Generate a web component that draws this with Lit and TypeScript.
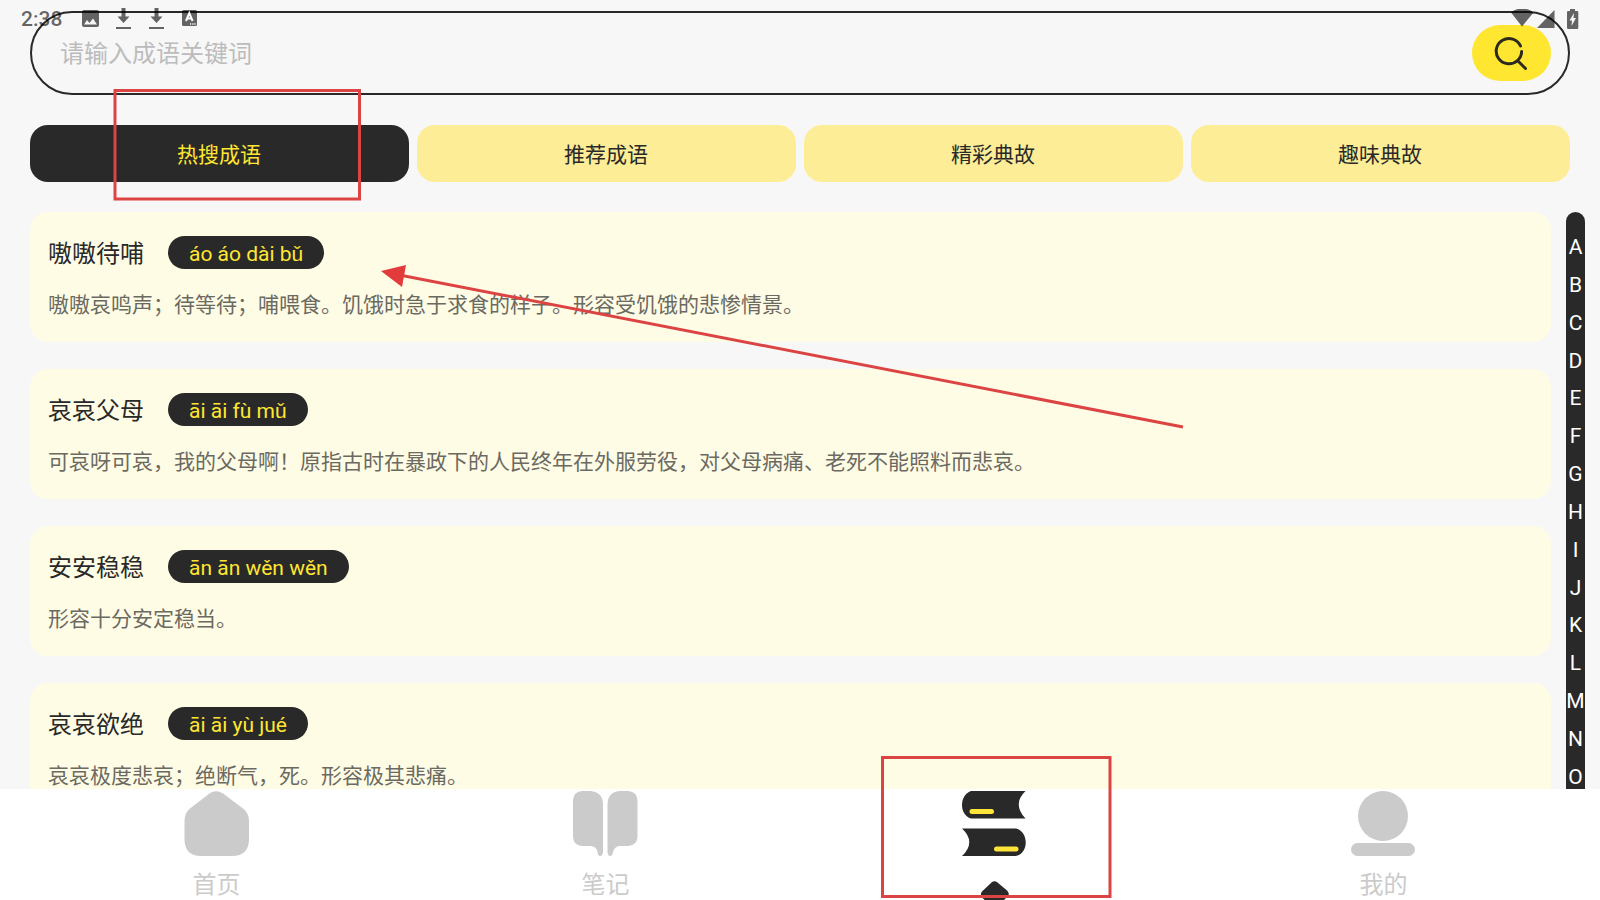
import { LitElement, html, css, svg } from "lit";
import { customElement, state } from "lit/decorators.js";
import { classMap } from "lit/directives/class-map.js";

interface Idiom {
  word: string;
  pinyin: string;
  meaning: string;
}

const TABS = ["热搜成语", "推荐成语", "精彩典故", "趣味典故"];

const IDIOMS: Idiom[] = [
  { word: "嗷嗷待哺", pinyin: "áo áo dài bǔ", meaning: "嗷嗷哀鸣声；待等待；哺喂食。饥饿时急于求食的样子。形容受饥饿的悲惨情景。" },
  { word: "哀哀父母", pinyin: "āi āi fù mǔ", meaning: "可哀呀可哀，我的父母啊！原指古时在暴政下的人民终年在外服劳役，对父母病痛、老死不能照料而悲哀。" },
  { word: "安安稳稳", pinyin: "ān ān wěn wěn", meaning: "形容十分安定稳当。" },
  { word: "哀哀欲绝", pinyin: "āi āi yù jué", meaning: "哀哀极度悲哀；绝断气，死。形容极其悲痛。" },
];

const LETTERS = "ABCDEFGHIJKLMNO".split("");

const downloadIcon = html`<svg width="17" height="22" viewBox="0 0 17 22" aria-hidden="true">
  <path fill="currentColor" d="M5.500 0h4v8.500h4L7.500 15l-6-6.500h4zM0 19h15v2H0z" />
</svg>`;

@customElement("status-bar")
export class StatusBar extends LitElement {
  static styles = css`
    :host {
      display: flex;
      justify-content: space-between;
      align-items: center;
      height: 37px;
      padding: 0 21px;
      color: rgba(0, 0, 0, 0.6);
      font: 500 21px/24px Roboto, sans-serif;
      pointer-events: none;
    }
    .group {
      display: flex;
      align-items: center;
    }
    .notices {
      gap: 16px;
    }
    .time {
      margin-right: 4px;
    }
    .signals {
      gap: 3px;
    }
    .battery {
      margin-left: 9px;
    }
    svg {
      display: block;
    }
  `;

  render() {
    return html`
      <div class="group notices">
        <span class="time">2:38</span>
        <svg width="18" height="18" viewBox="0 0 18 18" aria-hidden="true">
          <path fill="currentColor" fill-rule="evenodd" d="M2 0h13a2 2 0 0 1 2 2v13a2 2 0 0 1-2 2H2a2 2 0 0 1-2-2V2a2 2 0 0 1 2-2zM2 14.500h13l-4-6-3.500 4.500-2.500-3z" />
        </svg>
        ${downloadIcon} ${downloadIcon}
        <svg width="16" height="18" viewBox="0 0 16 18" aria-hidden="true">
          <rect width="15" height="16" rx="1.500" fill="currentColor" />
          <path d="M4 11 7.300 3 10.600 11M5.300 8.500h4" fill="none" stroke="#fff" stroke-width="2" />
          <path d="M8 14h1.200M10.300 14h1.200M12.400 14h1.200" stroke="#fff" stroke-width="1.300" />
        </svg>
      </div>
      <div class="group signals">
        <svg width="23" height="19" viewBox="0 0 23 19" aria-hidden="true">
          <path fill="currentColor" d="M0 3.500C6.500-1.800 16-1.800 22.500 3.500L11 17.500z" />
        </svg>
        <svg width="18" height="18" viewBox="0 0 18 18" aria-hidden="true">
          <path fill="currentColor" d="M17.500 0v18H0z" />
        </svg>
        <svg class="battery" width="12" height="20" viewBox="0 0 12 20" aria-hidden="true">
          <path fill="currentColor" fill-rule="evenodd" d="M3 0h5v2h2a1.300 1.300 0 0 1 1.300 1.300v15.400a1.300 1.300 0 0 1-1.300 1.300H1.300A1.300 1.300 0 0 1 0 18.700V3.300A1.300 1.300 0 0 1 1.300 2H3zM7 4 2.500 11.500h2.500L4.500 17 9 9H6.500z" />
        </svg>
      </div>
    `;
  }
}

@customElement("app-root")
export class AppRoot extends LitElement {
  static styles = css`
    :host {
      --ink: #292929;
      --yellow: #ffe631;
      position: relative;
      display: flex;
      flex-direction: column;
      height: 100vh;
      overflow: hidden;
      background: #f7f7f7;
      color: var(--ink);
      font-family: Roboto, "Liberation Sans", "Noto Sans CJK SC", sans-serif;
      font-weight: 400;
    }
    *,
    *::before {
      box-sizing: border-box;
    }
    button,
    input {
      font: inherit;
      color: inherit;
      border: 0;
      background: none;
      padding: 0;
      margin: 0;
    }
    a {
      color: inherit;
      text-decoration: none;
    }
    svg {
      display: block;
    }
    .status {
      position: absolute;
      inset: 0 0 auto 0;
      z-index: 2;
    }
    .page {
      flex: 1;
      min-height: 0;
      display: flex;
      flex-direction: column;
      gap: 30px;
      padding: 11px 15px 0 30px;
    }
    .search {
      display: flex;
      align-items: center;
      margin-right: 15px;
      height: 84px;
      padding: 0 17px 0 28px;
      border: 2px solid var(--ink);
      border-radius: 42px;
    }
    .field {
      flex: 1;
      min-width: 0;
      height: 56px;
      padding-top: 2px;
      font-size: 24px;
      outline: none;
    }
    .field::placeholder {
      color: #bcbcbc;
      opacity: 1;
    }
    .go {
      display: grid;
      place-items: center;
      width: 79px;
      height: 56px;
      padding: 0 1px 2px 0;
      border-radius: 28px;
      background: var(--yellow);
    }
    .tabs {
      display: grid;
      grid-template-columns: repeat(4, 1fr);
      gap: 8px;
      margin-right: 15px;
    }
    .tab {
      height: 57px;
      padding: 0 1px 2px 0;
      border-radius: 18px;
      background: #fced96;
      font-size: 21px;
    }
    .tab.on {
      background: var(--ink);
      color: var(--yellow);
    }
    .body {
      flex: 1;
      min-height: 0;
      display: flex;
      gap: 15px;
      overflow: hidden;
    }
    .list {
      flex: 1;
      min-width: 0;
      display: flex;
      flex-direction: column;
      gap: 27px;
      margin: 0;
      padding: 0;
      list-style: none;
    }
    .card {
      flex: none;
      display: flex;
      flex-direction: column;
      gap: 20px;
      padding: 24px 18px 21px;
      border-radius: 18px;
      background: #fffce5;
    }
    .head {
      display: flex;
      align-items: flex-start;
      gap: 24px;
    }
    .word {
      margin: 0;
      padding-top: 2px;
      font-size: 24px;
      line-height: 32px;
      font-weight: inherit;
    }
    .pinyin {
      padding: 3px 21px 0;
      border-radius: 17px;
      background: var(--ink);
      color: var(--yellow);
      font-size: 21px;
      line-height: 30px;
    }
    .meaning {
      margin: 0;
      color: #6b6a62;
      font-size: 21px;
      line-height: 31px;
    }
    .index {
      display: flex;
      flex-direction: column;
      align-items: center;
      justify-content: space-between;
      width: 19px;
      padding-top: 23px;
      border-radius: 10px 10px 0 0;
      background: var(--ink);
    }
    .letter {
      color: #fff;
      font-size: 21px;
      line-height: 24px;
    }
    .nav {
      display: grid;
      grid-template-columns: repeat(4, 1fr);
      height: 111px;
      padding: 2px 22px 0;
      background: #fff;
      overflow: hidden;
    }
    .item {
      display: flex;
      flex-direction: column;
      align-items: center;
      gap: 12px;
      color: #cbcbcb;
      font-size: 24px;
      line-height: 34px;
    }
    .current {
      gap: 25px;
      color: var(--ink);
    }
    .marks {
      position: absolute;
      inset: 0;
      width: 100%;
      height: 100%;
      z-index: 3;
      pointer-events: none;
    }
  `;

  @state() private active = 0;

  private navItems = [
    {
      label: "首页",
      art: svg`<path fill="currentColor" d="M25.500 2.500Q32-2 39 2.500L59 17.500Q65 22 65 30V48Q65 65 48 65H17Q0.500 65 0.500 48V30Q0.500 22 6 17.500z" />`,
    },
    {
      label: "笔记",
      art: svg`<path fill="currentColor" d="M8.500 0H17.500Q29.500 1 30 13V61Q29.500 65 27 65Q25 65 24.500 61Q23.500 55.500 17.500 55H8.500Q0.500 54 0 46V9Q0.500 1 8.500 0zM55.500 0H46.500Q35 1 34.500 13V61Q35 65 37 65Q39.500 65 40 61Q41.500 55.500 46.500 55H55.500Q64 54 64.500 46V9Q64 1 55.500 0z" />`,
    },
    {
      label: "",
      art: svg`<path fill="currentColor" d="M9 0H63.500Q50 13 63.500 27.500H9C-3 24-3 4 9 0zM54 37.500H0Q14.500 51 0 65H54C67 62 67 41 54 37.500z" />
        <path stroke="#ffe43a" stroke-width="5" stroke-linecap="round" d="M10 20.500H29.500M34.500 58H54" />`,
    },
    {
      label: "我的",
      art: svg`<circle cx="32" cy="25" r="25" fill="currentColor" /><rect y="52" width="64" height="13" rx="6.500" fill="currentColor" />`,
    },
  ];

  render() {
    return html`
      <status-bar class="status"></status-bar>
      <main class="page">
        <form class="search" role="search" @submit=${(e: Event) => e.preventDefault()}>
          <input class="field" type="text" aria-label="成语关键词" placeholder="请输入成语关键词" />
          <button class="go" type="submit" aria-label="搜索">
            <svg width="40" height="40" viewBox="0 0 40 40" fill="none" stroke="#2b2a1c" stroke-width="3" stroke-linecap="round">
              <path d="M29.500 14A12.700 12.700 0 1 0 26.500 28.500L34.500 36.500M26.500 28.500Q30.700 24.500 30.600 19.500" />
            </svg>
          </button>
        </form>
        <div class="tabs" role="tablist">
          ${TABS.map(
            (name, i) => html`<button
              class=${classMap({ tab: true, on: i === this.active })}
              type="button"
              role="tab"
              aria-selected=${i === this.active}
              @click=${() => (this.active = i)}
            >${name}</button>`
          )}
        </div>
        <div class="body">
          <ul class="list">
            ${IDIOMS.map(
              (it) => html`<li class="card">
                <div class="head">
                  <h2 class="word">${it.word}</h2>
                  <span class="pinyin">${it.pinyin}</span>
                </div>
                <p class="meaning">${it.meaning}</p>
              </li>`
            )}
          </ul>
          <nav class="index" aria-label="字母索引">
            ${LETTERS.map((l) => html`<a class="letter" href="#${l}">${l}</a>`)}
          </nav>
        </div>
      </main>
      <nav class="nav">
        ${this.navItems.map(
          (n) => html`<a class=${classMap({ item: true, current: !n.label })} href="#" aria-label=${n.label || "典籍"}>
            <svg width="65" height="65" viewBox="0 0 65 65" fill="none">${n.art}</svg>
            ${n.label
              ? html`<span>${n.label}</span>`
              : html`<svg width="28" height="28" viewBox="0 0 28 28"><path fill="currentColor" d="M10.500 1.500Q13.500-1 16.500 1.500L26 9.500Q28.500 12 27.500 14.500L16.500 25.500Q13.500 28 10.500 25.500L0.500 16Q-1 13 1 10.500z" /></svg>`}
          </a>`
        )}
      </nav>
      <svg class="marks" viewBox="0 0 1600 900" preserveAspectRatio="none" fill="none" stroke="#dc4444" stroke-width="3" aria-hidden="true">
        <rect x="115" y="90.500" width="244.500" height="108.500" />
        <rect x="882.500" y="757.500" width="227.500" height="139" />
        <path d="M402 275.500 1183 427" />
        <path d="M381 271 406 265 402 287z" fill="#e23b3b" stroke="none" />
      </svg>
    `;
  }
}
